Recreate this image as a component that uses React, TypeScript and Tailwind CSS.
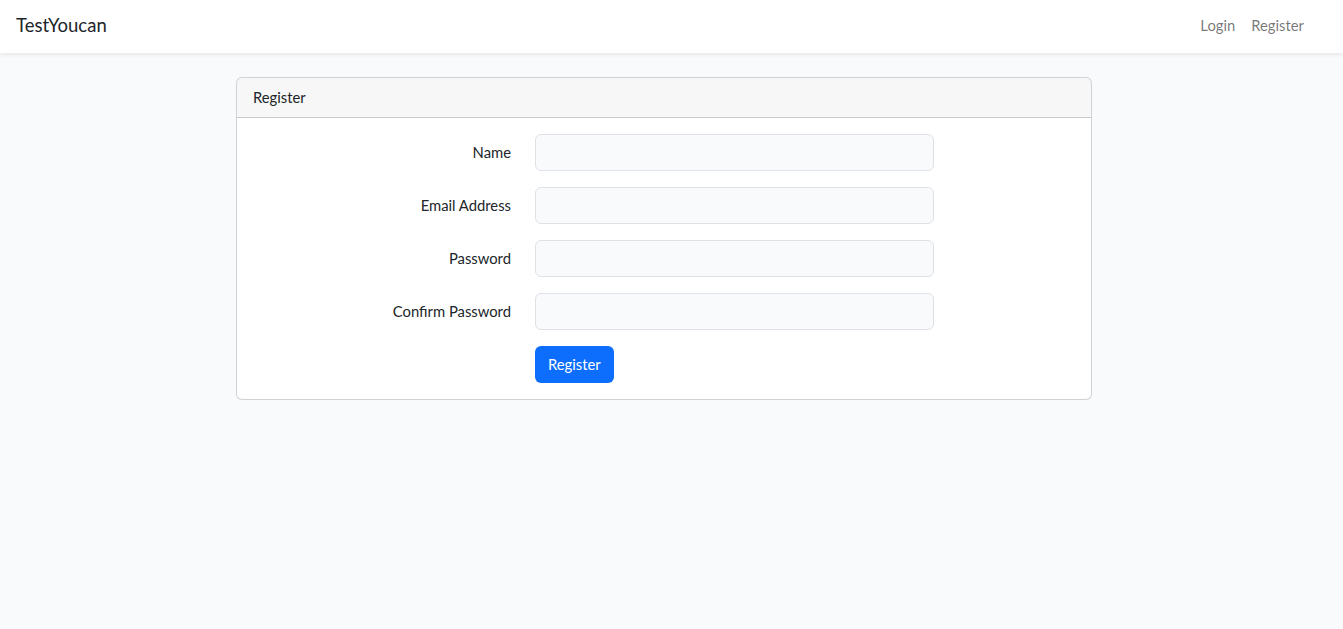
import React from 'react';

const fields = [
    { label: 'Name', type: 'text' },
    { label: 'Email Address', type: 'email' },
    { label: 'Password', type: 'password' },
    { label: 'Confirm Password', type: 'password' },
];

export default function App() {
    return (
        <div className="min-h-screen bg-[#f8fafc] text-[#212529] text-[14.8px] leading-[1.6]" style={{ fontFamily: 'Lato, "Open Sans", sans-serif' }}>
            {/* Navbar */}
            <nav className="h-[53px] bg-white shadow-[0_2px_4px_rgba(0,0,0,0.075)] flex items-center justify-between pl-[16px] pr-[31px] pb-[2px]">
                <a className="text-[18.5px] text-[#212529]">TestYoucan</a>
                <div className="flex items-center">
                    <a className="px-[8px] text-[rgba(0,0,0,0.55)]">Login</a>
                    <a className="px-[8px] text-[rgba(0,0,0,0.55)]">Register</a>
                </div>
            </nav>

            {/* Card */}
            <main className="pt-[24px]">
                <div className="ml-[236px] w-[856px] bg-white border border-[rgba(0,0,0,0.175)] rounded-[6px] overflow-hidden">
                    <div className="h-[40px] px-[16px] flex items-center bg-[rgba(0,0,0,0.03)] border-b border-[rgba(0,0,0,0.175)]">
                        Register
                    </div>
                    <form className="p-[16px] flex flex-col gap-[16px]">
                        {fields.map((f) => (
                            <div key={f.label} className="flex items-center">
                                <label className="w-[270px] text-right pr-[12px] shrink-0">{f.label}</label>
                                <div className="pl-[12px]">
                                    <input
                                        type={f.type}
                                        className="w-[399px] h-[37px] px-[12px] bg-[#f8fafc] border border-[#dee2e6] rounded-[6px] outline-none"
                                    />
                                </div>
                            </div>
                        ))}
                        <div className="flex">
                            <div className="w-[270px] shrink-0" />
                            <div className="pl-[12px]">
                                <button type="submit" className="h-[37px] px-[13px] bg-[#0d6efd] text-white rounded-[6px]">
                                    Register
                                </button>
                            </div>
                        </div>
                    </form>
                </div>
            </main>
        </div>
    );
}
